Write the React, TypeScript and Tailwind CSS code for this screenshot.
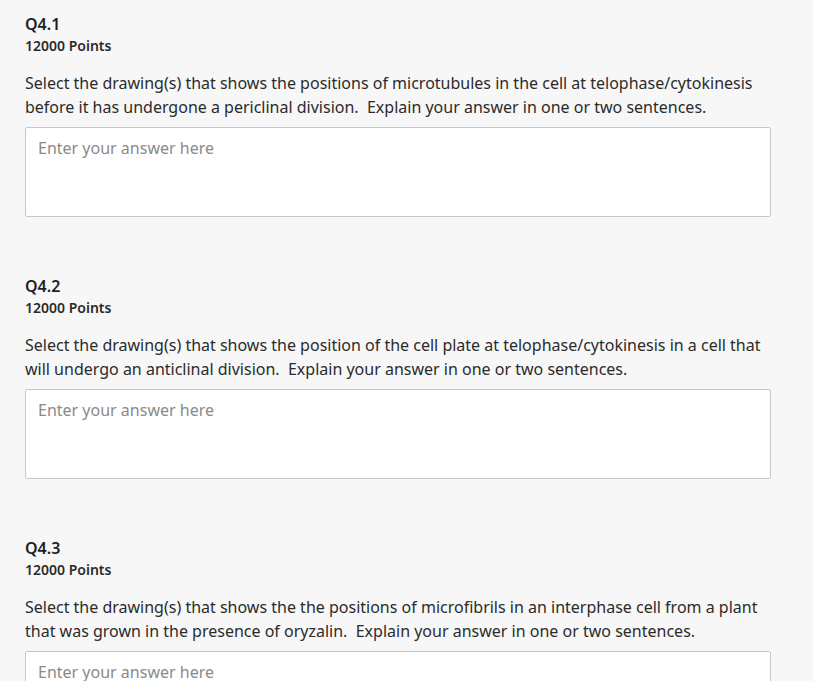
const QUESTIONS = [
  {
    id: 'Q4.1',
    points: 12000,
    text: 'Select the drawing(s) that shows the positions of microtubules in the cell at telophase/cytokinesis before it has undergone a periclinal division.  Explain your answer in one or two sentences.',
  },
  {
    id: 'Q4.2',
    points: 12000,
    text: 'Select the drawing(s) that shows the position of the cell plate at telophase/cytokinesis in a cell that will undergo an anticlinal division.  Explain your answer in one or two sentences.',
  },
  {
    id: 'Q4.3',
    points: 12000,
    text: 'Select the drawing(s) that shows the the positions of microfibrils in an interphase cell from a plant that was grown in the presence of oryzalin.  Explain your answer in one or two sentences.',
  },
];

function Question({ id, points, text }: { id: string; points: number; text: string }) {
  return (
    <section className="pt-[14px] pb-[45px]">
      <h2 className="text-base leading-5 font-semibold text-[#1f1f1f]">{id}</h2>
      <div className="mt-[3px] text-sm leading-[18px] font-semibold text-[#2b2b2b]">{points} Points</div>
      <p className="mt-4 text-base leading-6 text-[#2b2b2b] whitespace-pre-wrap">{text}</p>
      <textarea
        placeholder="Enter your answer here"
        className="mt-2 block w-full h-[90px] resize-none rounded-[2px] border border-[#c8c8c8] bg-white px-3 pt-2 text-base leading-6 text-[#2b2b2b] placeholder:text-[#8a8a8a] outline-none"
      />
    </section>
  );
}

export default function App() {
  return (
    <div className="min-h-[681px] bg-[#f7f7f7] pl-[25px] pr-[42px]" style={{ fontFamily: '"Noto Sans", "Open Sans", sans-serif' }}>
      {QUESTIONS.map((q) => (
        <Question key={q.id} {...q} />
      ))}
    </div>
  );
}
